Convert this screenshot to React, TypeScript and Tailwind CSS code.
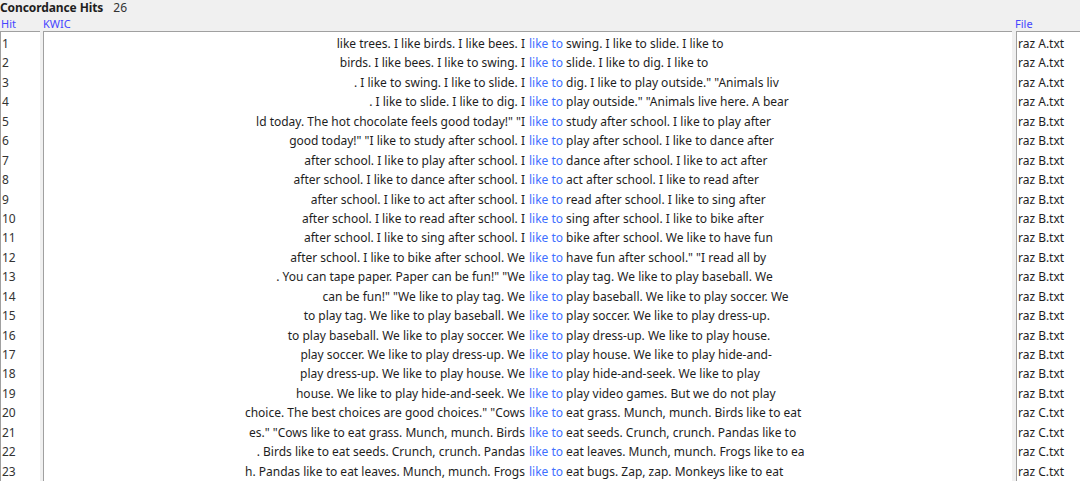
import React from "react";

const rows: [string, string, string][] = [
  ["like trees. I like birds. I like bees. I", "swing. I like to slide. I like to", "raz A.txt"],
  ["birds. I like bees. I like to swing. I", "slide. I like to dig. I like to", "raz A.txt"],
  [". I like to swing. I like to slide. I", "dig. I like to play outside.\" \"Animals liv", "raz A.txt"],
  [". I like to slide. I like to dig. I", "play outside.\" \"Animals live here. A bear", "raz A.txt"],
  ["ld today. The hot chocolate feels good today!\" \"I", "study after school. I like to play after", "raz B.txt"],
  ["good today!\" \"I like to study after school. I", "play after school. I like to dance after", "raz B.txt"],
  ["after school. I like to play after school. I", "dance after school. I like to act after", "raz B.txt"],
  ["after school. I like to dance after school. I", "act after school. I like to read after", "raz B.txt"],
  ["after school. I like to act after school. I", "read after school. I like to sing after", "raz B.txt"],
  ["after school. I like to read after school. I", "sing after school. I like to bike after", "raz B.txt"],
  ["after school. I like to sing after school. I", "bike after school. We like to have fun", "raz B.txt"],
  ["after school. I like to bike after school. We", "have fun after school.\" \"I read all by", "raz B.txt"],
  [". You can tape paper. Paper can be fun!\" \"We", "play tag. We like to play baseball. We", "raz B.txt"],
  ["can be fun!\" \"We like to play tag. We", "play baseball. We like to play soccer. We", "raz B.txt"],
  ["to play tag. We like to play baseball. We", "play soccer. We like to play dress-up.", "raz B.txt"],
  ["to play baseball. We like to play soccer. We", "play dress-up. We like to play house.", "raz B.txt"],
  ["play soccer. We like to play dress-up. We", "play house. We like to play hide-and-", "raz B.txt"],
  ["play dress-up. We like to play house. We", "play hide-and-seek. We like to play", "raz B.txt"],
  ["house. We like to play hide-and-seek. We", "play video games. But we do not play", "raz B.txt"],
  ["choice. The best choices are good choices.\" \"Cows", "eat grass. Munch, munch. Birds like to eat", "raz C.txt"],
  ["es.\" \"Cows like to eat grass. Munch, munch. Birds", "eat seeds. Crunch, crunch. Pandas like to", "raz C.txt"],
  [". Birds like to eat seeds. Crunch, crunch. Pandas", "eat leaves. Munch, munch. Frogs like to ea", "raz C.txt"],
  ["h. Pandas like to eat leaves. Munch, munch. Frogs", "eat bugs. Zap, zap. Monkeys like to eat", "raz C.txt"],
];

export default function App() {
  return (
    <div
      className="w-[1080px] h-[481px] overflow-hidden bg-[#f0f0f0] text-[#1e1e1e]"
      style={{ fontFamily: '"Noto Sans", "Open Sans", sans-serif' }}
    >
      <div className="h-[15px] flex items-center text-[12px] leading-none">
        <span className="font-bold tracking-[-0.1px]">Concordance Hits</span>
        <span className="ml-[10px] text-[#333]">26</span>
      </div>
      <div className="h-[16px] pt-[1px] flex items-center text-[11px] leading-none text-[#4646ff]">
        <span className="w-[43px] pl-[1px]">Hit</span>
        <span className="w-[972px]">KWIC</span>
        <span>File</span>
      </div>
      <div className="flex h-[450px] text-[12px]">
        <div className="w-[40px] bg-white border-l border-t border-[#a0a0a0] pt-[2px]">
          {rows.map((_, i) => (
            <div key={i} className="h-[19.45px] leading-[19.45px] pl-[1px] text-[#333]">
              {i + 1}
            </div>
          ))}
        </div>
        <div className="w-[969px] ml-[3px] bg-white border-l border-t border-[#a0a0a0] pt-[2px]">
          {rows.map((r, i) => (
            <div key={i} className="h-[19.45px] leading-[19.45px] flex whitespace-nowrap">
              <span className="w-[481px] text-right overflow-hidden shrink-0">{r[0]}</span>
              <span className="ml-[4px] text-[#3f6fff]">like to</span>
              <span className="ml-[3px]">{r[1]}</span>
            </div>
          ))}
        </div>
        <div className="flex-1 ml-[4px] bg-white border-l border-t border-[#a0a0a0] pt-[2px]">
          {rows.map((r, i) => (
            <div key={i} className="h-[19.45px] leading-[19.45px] pl-[1px] whitespace-nowrap">
              {r[2]}
            </div>
          ))}
        </div>
      </div>
    </div>
  );
}
